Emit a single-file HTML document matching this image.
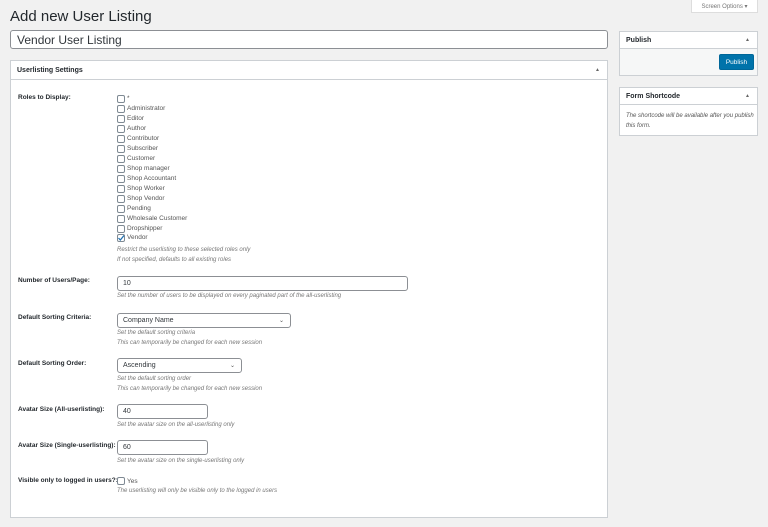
<!DOCTYPE html>
<html><head><meta charset="utf-8"><style>
*{box-sizing:border-box;margin:0;padding:0}
body{width:768px;height:527px;background:#f1f1f1;font-family:"Liberation Sans",sans-serif;position:relative;overflow:hidden;color:#23282d}
.a{position:absolute}
.lbl{position:absolute;left:18px;font-size:6.5px;font-weight:bold;color:#23282d}
.help{position:absolute;left:117px;font-size:6px;font-style:italic;color:#777}
.cb{position:absolute;left:117px;width:8px;height:8px;border:1px solid #7e8993;border-radius:2px;background:#fff}
.ct{position:absolute;left:127px;font-size:6.5px;color:#555;margin-top:1px}
.inp{position:absolute;left:117px;background:#fff;border:1px solid #8c8f94;border-radius:3px;font-size:7px;color:#32373c;padding-left:5px;display:flex;align-items:center}
.box{position:absolute;background:#fff;border:1px solid #ccd0d4}
.hd{font-size:7px;font-weight:bold;padding-left:6px;display:flex;align-items:center;border-bottom:1px solid #ccd0d4;position:relative}
.hd:after{content:"▲";position:absolute;right:7px;font-size:5px;color:#666}
.arr{position:absolute;right:6px;top:3px;font-size:6px;color:#555}
</style></head><body>
<div class="a" style="left:691px;top:-1px;width:67px;height:14px;background:#fff;border:1px solid #ddd;font-size:6px;color:#777;display:flex;align-items:center;justify-content:center">Screen Options ▾</div>
<div class="a" style="left:10px;top:8px;font-size:15px;color:#23282d">Add new User Listing</div>
<div class="a" style="left:10px;top:30px;width:598px;height:19px;background:#fff;border:1px solid #8c8f94;border-radius:3px;font-size:12px;padding-left:6px;display:flex;align-items:center;color:#32373c">Vendor User Listing</div>

<div class="box" style="left:10px;top:60px;width:598px;height:458px">
<div class="hd" style="height:19px">Userlisting Settings</div>
</div>

<div class="lbl" style="top:94px">Roles to Display:</div>
<div class="cb" style="top:95px"></div><div class="ct" style="top:94px">*</div>
<div class="cb" style="top:105px"></div><div class="ct" style="top:104px">Administrator</div>
<div class="cb" style="top:115px"></div><div class="ct" style="top:114px">Editor</div>
<div class="cb" style="top:125px"></div><div class="ct" style="top:124px">Author</div>
<div class="cb" style="top:135px"></div><div class="ct" style="top:134px">Contributor</div>
<div class="cb" style="top:145px"></div><div class="ct" style="top:144px">Subscriber</div>
<div class="cb" style="top:155px"></div><div class="ct" style="top:154px">Customer</div>
<div class="cb" style="top:165px"></div><div class="ct" style="top:164px">Shop manager</div>
<div class="cb" style="top:175px"></div><div class="ct" style="top:174px">Shop Accountant</div>
<div class="cb" style="top:185px"></div><div class="ct" style="top:184px">Shop Worker</div>
<div class="cb" style="top:195px"></div><div class="ct" style="top:194px">Shop Vendor</div>
<div class="cb" style="top:205px"></div><div class="ct" style="top:204px">Pending</div>
<div class="cb" style="top:215px"></div><div class="ct" style="top:214px">Wholesale Customer</div>
<div class="cb" style="top:225px"></div><div class="ct" style="top:224px">Dropshipper</div>
<div class="cb" style="top:234px"><svg width="8" height="8" style="position:absolute;left:-1px;top:-1px"><path d="M1.5 4 L3.3 6 L7 1.5" stroke="#2271b1" stroke-width="1.3" fill="none"/></svg></div><div class="ct" style="top:233px">Vendor</div>
<div class="help" style="top:247px">Restrict the userlisting to these selected roles only</div>
<div class="help" style="top:257px">If not specified, defaults to all existing roles</div>

<div class="lbl" style="top:277px">Number of Users/Page:</div>
<div class="inp" style="top:276px;width:291px;height:15px">10</div>
<div class="help" style="top:293px">Set the number of users to be displayed on every paginated part of the all-userlisting</div>

<div class="lbl" style="top:314px">Default Sorting Criteria:</div>
<div class="inp" style="top:313px;width:174px;height:15px">Company Name<span class="arr">⌄</span></div>
<div class="help" style="top:330px">Set the default sorting criteria</div>
<div class="help" style="top:340px">This can temporarily be changed for each new session</div>

<div class="lbl" style="top:360px">Default Sorting Order:</div>
<div class="inp" style="top:358px;width:125px;height:15px">Ascending<span class="arr">⌄</span></div>
<div class="help" style="top:376px">Set the default sorting order</div>
<div class="help" style="top:386px">This can temporarily be changed for each new session</div>

<div class="lbl" style="top:406px">Avatar Size (All-userlisting):</div>
<div class="inp" style="top:404px;width:91px;height:15px">40</div>
<div class="help" style="top:422px">Set the avatar size on the all-userlisting only</div>

<div class="lbl" style="top:442px">Avatar Size (Single-userlisting):</div>
<div class="inp" style="top:440px;width:91px;height:15px">60</div>
<div class="help" style="top:458px">Set the avatar size on the single-userlisting only</div>

<div class="lbl" style="top:477px">Visible only to logged in users?:</div>
<div class="cb" style="top:477px"></div><div class="ct" style="top:477px">Yes</div>
<div class="help" style="top:488px">The userlisting will only be visible only to the logged in users</div>

<div class="box" style="left:619px;top:31px;width:139px;height:45px;background:#f6f7f7">
<div class="hd" style="height:17px;background:#fff">Publish</div>
<div class="a" style="left:99px;top:22px;width:35px;height:16px;background:#0073aa;border:1px solid #006799;border-radius:2px;color:#fff;font-size:6.5px;display:flex;align-items:center;justify-content:center">Publish</div>
</div>
<div class="box" style="left:619px;top:87px;width:139px;height:49px">
<div class="hd" style="height:17px">Form Shortcode</div>
<div class="a" style="left:6px;top:23px;font-size:6px;font-style:italic;color:#555;line-height:10px;width:130px">The shortcode will be available after you publish this form.</div>
</div>
</body></html>
